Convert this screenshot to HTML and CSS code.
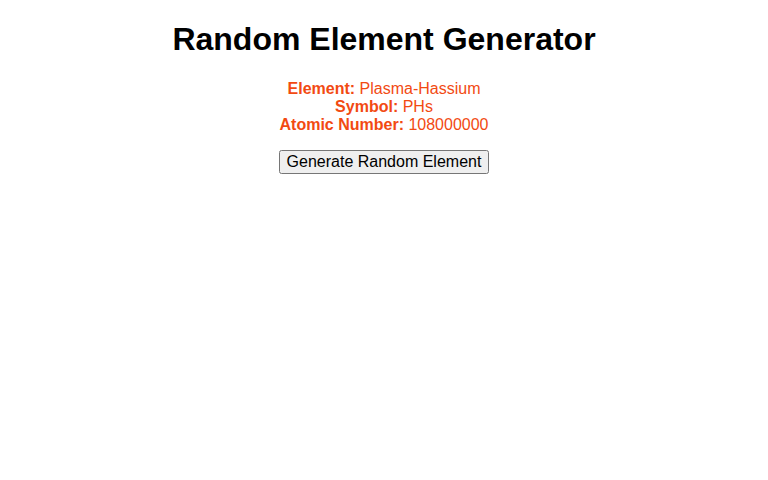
FILE: index.html
```html
<!DOCTYPE html>
<html lang="en">
<head>
    <meta charset="utf-8">
    <title>Random Element Generator</title>
    <link rel="stylesheet" href="styles.css">
</head>
<body>
    <h1>Random Element Generator</h1>
    <div class="element-info" id="element-info">
        <div><strong>Element:</strong> <span id="element-name">Plasma-Hassium</span></div>
        <div><strong>Symbol:</strong> <span id="element-symbol">PHs</span></div>
        <div><strong>Atomic Number:</strong> <span id="element-number">108000000</span></div>
    </div>
    <button id="generate-button">Generate Random Element</button>
</body>
</html>
```

FILE: styles.css
```css
body {
    font-family: 'Liberation Sans', Arial, sans-serif;
    margin: 0;
    text-align: center;
    color: #000;
    background-color: #fff;
}

h1 {
    font-size: 32px;
    margin: 0.67em 0;
}

.element-info {
    color: #f24a12;
    font-size: 16px;
    line-height: 18px;
    margin-bottom: 16px;
}

#generate-button {
    font-family: 'Liberation Sans', Arial, sans-serif;
    font-size: 16px;
}
```
